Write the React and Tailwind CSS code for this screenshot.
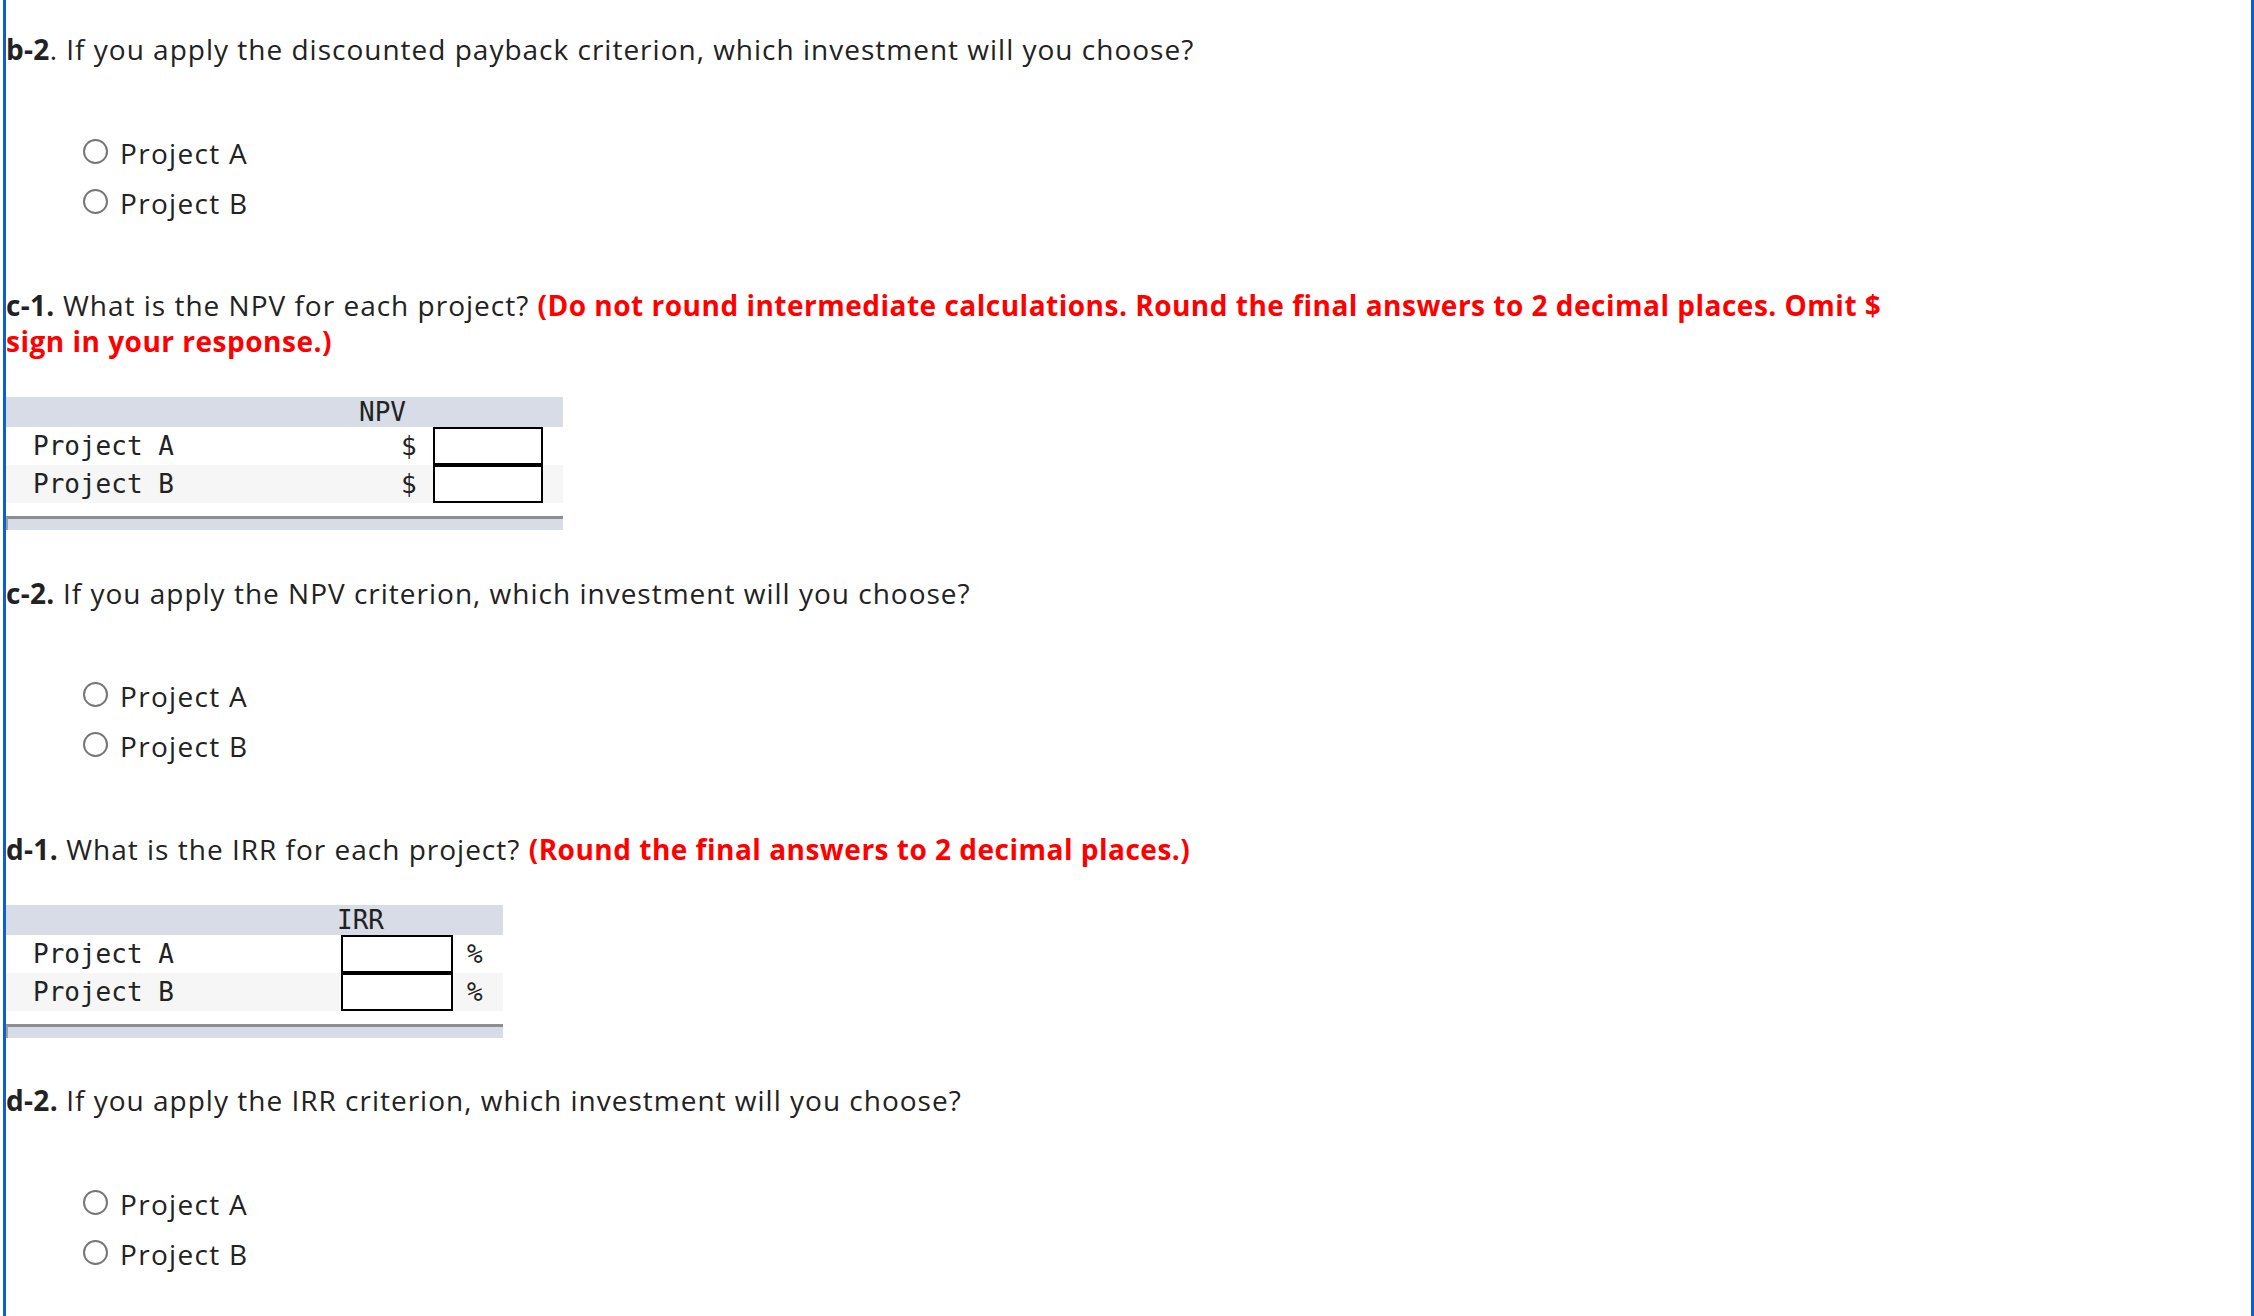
import React from "react";

function Radio({ label }) {
  return (
    <div className="flex items-center h-[50px] pl-[77px]">
      <span className="block w-[25px] h-[25px] rounded-full border-2 border-[#767676] bg-white -translate-y-[2px]" />
      <span className="ml-[12px] text-[28px] leading-[36px] text-[#222] tracking-[1.3px]">{label}</span>
    </div>
  );
}

function Radios({ className }) {
  return (
    <div className={className}>
      <Radio label="Project A" />
      <Radio label="Project B" />
    </div>
  );
}

function NpvTable() {
  return (
    <div className="w-[557px] [font-family:DejaVu_Sans_Mono,monospace] text-[26px] text-[#222]">
      <div className="h-[30px] bg-[#d8dce6] flex items-center pl-[353px] leading-none">NPV</div>
      {["Project A", "Project B"].map((p, i) => (
        <div key={p} className={"h-[38px] flex items-center " + (i === 1 ? "bg-[#f6f6f6]" : "bg-white")}>
          <div className="w-[395px] pl-[27px] leading-none whitespace-pre">{p}</div>
          <div className="w-[16px] leading-none">$</div>
          <div className="ml-[16px] w-[110px] h-[38px] border-2 border-black bg-white" />
        </div>
      ))}
      <div className="h-[13px]" />
      <div className="h-[14px] bg-[#d8dce6] border-t-[3px] border-l-[2px] border-t-[#8e8e8e] border-l-[#a0a0a0]" />
    </div>
  );
}

function IrrTable() {
  return (
    <div className="w-[497px] [font-family:DejaVu_Sans_Mono,monospace] text-[26px] text-[#222]">
      <div className="h-[30px] bg-[#d8dce6] flex items-center pl-[331px] leading-none">IRR</div>
      {["Project A", "Project B"].map((p, i) => (
        <div key={p} className={"h-[38px] flex items-center " + (i === 1 ? "bg-[#f6f6f6]" : "bg-white")}>
          <div className="w-[335px] pl-[27px] leading-none whitespace-pre">{p}</div>
          <div className="w-[112px] h-[38px] border-2 border-black bg-white" />
          <div className="ml-[14px] w-[16px] leading-none">%</div>
        </div>
      ))}
      <div className="h-[13px]" />
      <div className="h-[14px] bg-[#d8dce6] border-t-[3px] border-l-[2px] border-t-[#8e8e8e] border-l-[#a0a0a0]" />
    </div>
  );
}

export default function App() {
  const p = "text-[28px] leading-[36px] text-[#222] tracking-[1px]";
  const b = "font-bold tracking-[0.3px]";
  const r = "font-bold text-[#ff0000] tracking-[0.5px]";
  return (
    <div className="w-[2254px] h-[1316px] bg-white pl-[3px] flex overflow-hidden [font-family:Open_Sans,sans-serif]">
      <div className="flex-1 h-full border-l-[3px] border-r-[3px] border-[#0b5fcf] pt-[31px] flex flex-col items-start">
        <p className={p}>
          <b className={b}>b-2</b>. If you apply the discounted payback criterion, which investment will you choose?
        </p>
        <Radios className="mt-[61px]" />
        <p className={p + " mt-[59px]"}>
          <b className={b}>c-1.</b> What is the NPV for each project?{" "}
          <b className={r}>
            (Do not round intermediate calculations. Round the final answers to 2 decimal places. Omit $
          </b>
          <br />
          <b className={r}>sign in your response.)</b>
        </p>
        <div className="mt-[38px]">
          <NpvTable />
        </div>
        <p className={p + " mt-[45px]"}>
          <b className={b}>c-2.</b> If you apply the NPV criterion, which investment will you choose?
        </p>
        <Radios className="mt-[60px]" />
        <p className={p + " mt-[60px]"}>
          <b className={b}>d-1.</b> What is the IRR for each project?{" "}
          <b className={r}>(Round the final answers to 2 decimal places.)</b>
        </p>
        <div className="mt-[38px]">
          <IrrTable />
        </div>
        <p className={p + " mt-[44px]"}>
          <b className={b}>d-2.</b> If you apply the IRR criterion, which investment will you choose?
        </p>
        <Radios className="mt-[61px]" />
      </div>
    </div>
  );
}
